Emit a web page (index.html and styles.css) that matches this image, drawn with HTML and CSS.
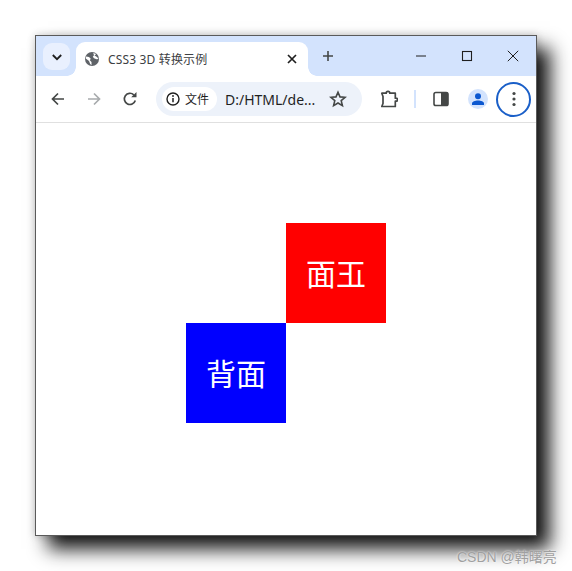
FILE: index.html
```html
<!DOCTYPE html>
<html lang="zh-CN">
<head>
<meta charset="utf-8">
<title>CSS3 3D 转换示例</title>
<link rel="stylesheet" href="styles.css">
</head>
<body>
<div class="window">
  <div class="titlebar">
    <div class="tab-search">
      <svg width="12" height="12" viewBox="0 0 12 12"><path d="M1.8 4l4.2 4.2L10.200 4" fill="none" stroke="#1f1f1f" stroke-width="1.800"/></svg>
    </div>
    <div class="tab">
      <svg class="globe" width="14" height="14" viewBox="0 0 14 14"><circle cx="7" cy="7" r="7" fill="#5f6368"/><path d="M1.200 4.500l2.800.5 1.800 1.800-1 1.400L6.500 10v3.300L5.200 12 4 9 .8 6.500zM8.200 1l3 .9-1.700 1.600 2.500 1.500 1.500 2-2 .2L9 6.200 7.800 4.800 9 3.200z" fill="#fff"/></svg>
      <span class="tab-title">CSS3 3D 转换示例</span>
      <svg class="tab-close" width="10" height="10" viewBox="0 0 10 10"><path d="M1 1l8 8M9 1l-8 8" stroke="#1f1f1f" stroke-width="1.700"/></svg>
    </div>
    <div class="new-tab">
      <svg width="12" height="12" viewBox="0 0 12 12"><path d="M6 1v10M1 6h10" stroke="#444746" stroke-width="1.600"/></svg>
    </div>
    <div class="controls">
      <div class="control"><svg width="12" height="12" viewBox="0 0 12 12"><path d="M1 6h10" stroke="#1f1f1f" stroke-width="1"/></svg></div>
      <div class="control"><svg width="12" height="12" viewBox="0 0 12 12"><rect x="1.500" y="1.500" width="9" height="9" fill="none" stroke="#1f1f1f" stroke-width="1.100"/></svg></div>
      <div class="control"><svg width="12" height="12" viewBox="0 0 12 12"><path d="M.8.8l10.400 10.400M11.200.8L.8 11.200" stroke="#1f1f1f" stroke-width="1"/></svg></div>
    </div>
  </div>
  <div class="toolbar">
    <div class="btn"><svg width="16" height="16" viewBox="0 0 16 16"><path d="M14 8H3M8 2.500L2.500 8 8 13.500" fill="none" stroke="#444746" stroke-width="1.700"/></svg></div>
    <div class="btn"><svg width="16" height="16" viewBox="0 0 16 16"><path d="M2 8h11M8 2.500L13.500 8 8 13.500" fill="none" stroke="#a8abad" stroke-width="1.700"/></svg></div>
    <div class="btn"><svg width="16" height="16" viewBox="0 0 16 16"><path d="M13.300 9.500A5.600 5.600 0 1 1 11.800 3.800" fill="none" stroke="#444746" stroke-width="1.700"/><path d="M9.200 6.300h5.300V1z" fill="#444746"/></svg></div>
    <div class="omnibox">
      <div class="chip">
        <svg width="14" height="14" viewBox="0 0 14 14"><circle cx="7" cy="7" r="6" fill="none" stroke="#1f1f1f" stroke-width="1.400"/><path d="M7 6v4.200" stroke="#1f1f1f" stroke-width="1.500"/><circle cx="7" cy="4" r=".9" fill="#1f1f1f"/></svg>
        <span class="chip-text">文件</span>
      </div>
      <span class="url">D:/HTML/de...</span>
      <svg class="star" width="18" height="18" viewBox="0 0 18 18"><path d="M9 2.200l2 4.700 5.100.4-3.900 3.300 1.200 5L9 13l-4.400 2.600 1.200-5-3.900-3.300 5.100-.4z" fill="none" stroke="#444746" stroke-width="1.600"/></svg>
    </div>
    <div class="btn ext"><svg width="18" height="18" viewBox="0 0 18 18"><path d="M1.800 3.200H6.200a1.800 1.800 0 0 1 3.600 0h5.500V8.200h.7a1.500 1.500 0 0 1 0 3h-.7v5.300H1.800l1.200-3V6.500z" fill="none" stroke="#444746" stroke-width="1.700" stroke-linejoin="round"/></svg></div>
    <div class="divider"></div>
    <div class="btn"><svg width="16" height="16" viewBox="0 0 16 16"><rect x="1" y="1.500" width="14" height="13" rx="1.800" fill="none" stroke="#444746" stroke-width="1.600"/><rect x="8" y="1.500" width="7" height="13" fill="#444746"/></svg></div>
    <div class="btn">
      <div class="avatar"><svg width="14" height="14" viewBox="0 0 14 14"><circle cx="7" cy="4.200" r="3" fill="#0b57d0"/><path d="M1 13v-1.500C1 9.500 4 8.500 7 8.500s6 1 6 3V13z" fill="#0b57d0"/></svg></div>
    </div>
    <div class="btn menu">
      <svg width="4" height="16" viewBox="0 0 4 16"><circle cx="2" cy="2.500" r="1.600" fill="#444746"/><circle cx="2" cy="8" r="1.600" fill="#444746"/><circle cx="2" cy="13.500" r="1.600" fill="#444746"/></svg>
    </div>
  </div>
  <main class="page">
    <div class="stage">
      <div class="face face-front"><span class="mirror">正面</span></div>
      <div class="face face-back">背面</div>
    </div>
  </main>
</div>
<div class="watermark">CSDN @韩曙亮</div>
</body>
</html>
```
FILE: styles.css
```css
* { box-sizing: border-box; }
html, body { margin: 0; height: 571px; overflow: hidden; background: #fff; }
body { padding: 35px 0 0 35px; position: relative; font-family: "Noto Sans", "Noto Sans CJK SC", sans-serif; }
.window {
  width: 502px;
  height: 501px;
  border: 1px solid #5a5a5a;
  background: #fff;
  display: flex;
  flex-direction: column;
  box-shadow: 13px 13px 18px rgba(0,0,0,.92), 0 0 8px rgba(0,0,0,.2);
}
.titlebar { height: 40px; background: #d3e3fd; display: flex; align-items: flex-start; flex: none; }
.tab-search { width: 27px; height: 27px; margin: 7px 0 0 7px; border-radius: 9px; background: #e9f0fe; display: flex; align-items: center; justify-content: center; }
.tab { position: relative; width: 232px; height: 34px; margin: 6px 0 0 6px; padding: 0 10px 0 9px; background: #fff; border-radius: 9px 9px 0 0; display: flex; align-items: center; }
.tab::before, .tab::after { content: ""; position: absolute; bottom: 0; width: 9px; height: 9px; }
.tab::before { left: -9px; background: radial-gradient(circle at 0 0, #d3e3fd 8.500px, #fff 9px); }
.tab::after { right: -9px; background: radial-gradient(circle at 100% 0, #d3e3fd 8.500px, #fff 9px); }
.globe { flex: none; }
.tab-title { margin-left: 9px; font-size: 12px; letter-spacing: .16px; color: #3c4043; white-space: nowrap; flex: 1; }
.tab-close { flex: none; margin-right: 1px; }
.new-tab { width: 20px; height: 20px; margin: 10px 0 0 10px; display: flex; align-items: center; justify-content: center; }
.controls { margin-left: auto; display: flex; }
.control { width: 46px; height: 40px; display: flex; align-items: center; justify-content: center; }
.toolbar { height: 46px; background: #fff; border-radius: 9px 9px 0 0; display: flex; align-items: center; padding-left: 4px; flex: none; position: relative; }
.btn { width: 36px; height: 36px; display: flex; align-items: center; justify-content: center; flex: none; }
.omnibox { width: 206px; height: 34px; margin-left: 8px; border-radius: 17px; background: #edf2fa; display: flex; align-items: center; padding: 0 15px 0 6px; flex: none; }
.chip { width: 55px; height: 24px; border-radius: 12px; background: #fff; display: flex; align-items: center; padding-left: 4px; flex: none; }
.chip-text { margin-left: 5px; font-size: 12px; color: #1f1f1f; }
.url { margin-left: 8px; font-size: 14px; color: #1f1f1f; white-space: nowrap; flex: 1; }
.star { flex: none; }
.ext { margin-left: 9px; }
.divider { width: 2px; height: 18px; margin: 0 7px; background: #d3e3fd; flex: none; }
.avatar { width: 20px; height: 20px; border-radius: 50%; background: #d3e3fd; display: flex; align-items: center; justify-content: center; margin-left: 1px; }
.menu { width: 35px; height: 35px; margin-left: 1px; border: 2.500px solid #1a5fc8; border-radius: 50%; }
.page { flex: 1; padding: 100px 0 0 150px; background: #fff; border-top: 1px solid #e0e0e0; }
.stage { display: grid; grid-template-columns: 100px 100px; grid-template-rows: 100px 100px; }
.face { width: 100px; height: 100px; padding-bottom: 2px; display: flex; align-items: center; justify-content: center; color: #fff; font-size: 30px; font-family: "Noto Sans CJK SC", sans-serif; }
.face-front { grid-column: 2; grid-row: 1; background: #f00; }
.face-back { grid-column: 1; grid-row: 2; background: #00f; }
.mirror { display: block; transform: scaleX(-1); }
.watermark { position: absolute; left: 457px; top: 546px; font-size: 14px; color: #a0a0a0; white-space: nowrap; text-shadow: 0 0 2px #fff; font-family: "Liberation Sans", "Noto Sans CJK SC", sans-serif; }
```
